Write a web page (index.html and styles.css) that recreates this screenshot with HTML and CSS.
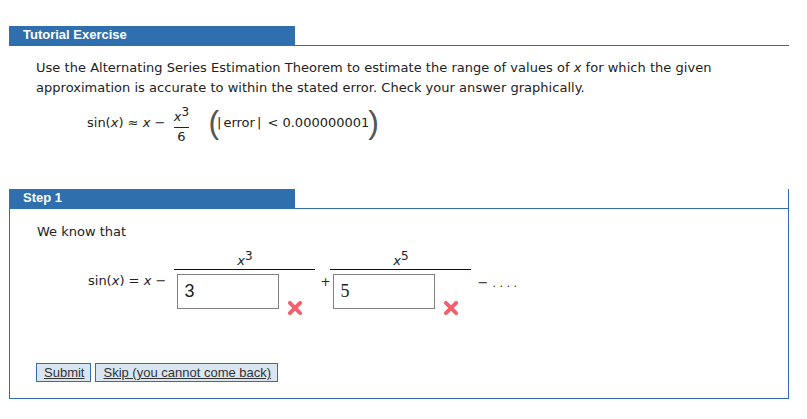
FILE: index.html
```html
<!DOCTYPE html>
<html lang="en">
<head>
    <meta charset="UTF-8">
    <meta name="viewport" content="width=device-width, initial-scale=1.0">
    <title>Tutorial Exercise</title>
    <link rel="stylesheet" href="styles.css">
</head>
<body>
    <!-- Question -->
    <div class="section">
        <div class="section-head"><div class="section-title">Tutorial Exercise</div></div>
        <div class="section-body">
            <p class="question">Use the Alternating Series Estimation Theorem to estimate the range of values of <i>x</i> for which the given approximation is accurate to within the stated error. Check your answer graphically.</p>
            <div class="math question-math">
                <span>sin(<i>x</i>) &asymp; <i>x</i> &minus;</span>
                <span class="frac small-frac">
                    <span class="num"><i>x</i><sup>3</sup></span>
                    <span class="den">6</span>
                </span>
                <span class="fence open">(</span>
                <span class="bound"><span class="bar">|</span>error<span class="bar">|</span> &lt; 0.000000001</span>
                <span class="fence close">)</span>
            </div>
        </div>
    </div>

    <!-- Step 1 -->
    <div class="section step">
        <div class="section-head"><div class="section-title">Step 1</div></div>
        <div class="section-body step-body">
            <p class="intro">We know that</p>
            <div class="math step-math">
                <span class="lead">sin(<i>x</i>) = <i>x</i> &minus;</span>
                <span class="frac answer-frac">
                    <span class="num"><i>x</i><sup>3</sup></span>
                    <span class="den answer">
                        <input class="answer-input sans" type="text" value="3">
                        <svg class="wrong" viewBox="0 0 14 14"><path d="M2.5 2.5L11.5 11.5M11.5 2.5L2.5 11.5"/></svg>
                    </span>
                </span>
                <span class="plus">+</span>
                <span class="frac answer-frac">
                    <span class="num"><i>x</i><sup>5</sup></span>
                    <span class="den answer">
                        <input class="answer-input serif" type="text" value="5">
                        <svg class="wrong" viewBox="0 0 14 14"><path d="M2.5 2.5L11.5 11.5M11.5 2.5L2.5 11.5"/></svg>
                    </span>
                </span>
                <span class="tail">&minus; <span class="dots">. . . .</span></span>
            </div>
            <div class="buttons">
                <button class="btn">Submit</button>
                <button class="btn">Skip (you cannot come back)</button>
            </div>
        </div>
    </div>
</body>
</html>
```

FILE: styles.css
```css
body {
    margin: 0;
    padding: 26px 18px 0 9px;
    background-color: white;
    color: #222;
    font-family: "DejaVu Sans", Verdana, sans-serif;
    font-size: 13px;
}

.section-head {
    border-bottom: 1px solid #2f6fad;
}

.section-title {
    width: 272px;
    height: 19px;
    padding-left: 14px;
    background-color: #2f6fad;
    color: white;
    font-family: "Liberation Sans", Arial, sans-serif;
    font-size: 13px;
    font-weight: bold;
    line-height: 18px;
}

.section-body {
    padding: 12px 27px 0;
}

.question {
    margin: 0;
    line-height: 20px;
    letter-spacing: 0.03px;
}

.math {
    display: flex;
    align-items: center;
}

.frac {
    display: inline-flex;
    flex-direction: column;
    align-items: center;
}

.num {
    white-space: nowrap;
}

sup {
    font-size: 12px;
    line-height: 0;
}

/* Question formula */
.question-math {
    margin: 1px 0 0 51px;
    height: 46px;
}

.small-frac {
    margin: 8px 17px 0 6px;
    min-width: 20px;
}

.small-frac .num {
    border-bottom: 1px solid #222;
    line-height: 20px;
}

.small-frac .den {
    line-height: 18px;
}

.fence {
    font-family: "Liberation Sans", Arial, sans-serif;
    font-size: 32px;
    line-height: 40px;
    color: #555;
}

.fence.open {
    margin-right: -5px;
}

.fence.close {
    margin-left: -2px;
}

.bound {
    margin: 0 1px;
}

.bar {
    margin: 0 2px;
}

/* Step 1 */
.step {
    margin-top: 44px;
    border-left: 1px solid #2f6fad;
    border-right: 1px solid #2f6fad;
    border-bottom: 1px solid #2f6fad;
}

.step .section-title {
    margin-left: -1px;
}

.step .section-head {
    margin-right: -1px;
}

.step-body {
    height: 175px;
    padding: 14px 0 0 27px;
}

.intro {
    margin: 0;
    line-height: 18px;
}

.step-math {
    align-items: flex-start;
    margin: 8px 0 0 51px;
}

.lead {
    margin-top: 24px;
    margin-right: 8px;
}

.answer-frac {
    width: 141px;
}

.answer-frac .num {
    align-self: stretch;
    height: 20px;
    line-height: 24px;
    text-align: center;
    border-bottom: 1px solid #111;
}

.den.answer {
    align-self: stretch;
    display: flex;
    align-items: flex-start;
    margin-top: 4px;
    padding-left: 3px;
}

.answer-input {
    box-sizing: border-box;
    width: 102px;
    height: 35px;
    padding: 0 6px;
    border: 1px solid #808080;
    font-size: 18px;
    color: #222;
    background-color: white;
}

.sans {
    font-family: "Liberation Sans", Arial, sans-serif;
}

.serif {
    font-family: "Liberation Serif", serif;
}

.wrong {
    width: 16px;
    height: 16px;
    margin: 26px 0 0 8px;
}

.wrong path {
    fill: none;
    stroke: #f4606c;
    stroke-width: 3.4;
    stroke-linecap: round;
}

.plus {
    margin: 26px 0 0 5px;
    font-size: 12px;
}

.tail {
    margin: 26px 0 0 6px;
    font-size: 13px;
}

.dots {
    font-size: 11px;
}

.buttons {
    display: flex;
    gap: 4px;
    margin: 47px 0 0 -1px;
}

.btn {
    height: 19px;
    padding: 0 6px 0 7px;
    background-color: #d9e5f1;
    border: 1px solid #2f6fad;
    color: #333;
    font-family: "Liberation Sans", Arial, sans-serif;
    font-size: 13px;
    line-height: 17px;
    text-decoration: underline;
    cursor: pointer;
}
```
